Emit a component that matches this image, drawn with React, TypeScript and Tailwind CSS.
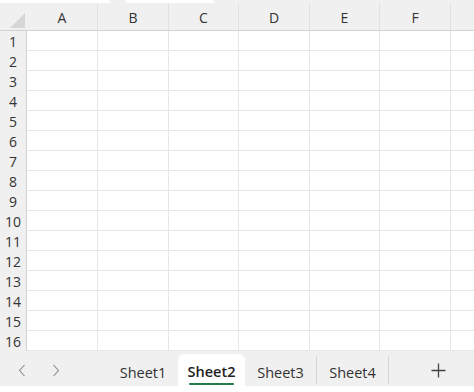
import React from 'react';

const COLS = [
  { label: 'A', w: 'w-[71px]' },
  { label: 'B', w: 'w-[71px]' },
  { label: 'C', w: 'w-[70px]' },
  { label: 'D', w: 'w-[71px]' },
  { label: 'E', w: 'w-[70px]' },
  { label: 'F', w: 'w-[71px]' },
];

const ROWS = Array.from({ length: 16 }, (_, i) => i + 1);

const TABS = [
  { label: 'Sheet1', w: 'w-[70px]' },
  { label: 'Sheet2', w: 'w-[67px]' },
  { label: 'Sheet3', w: 'w-[71px]' },
  { label: 'Sheet4', w: 'w-[71px]' },
];

const Chevron: React.FC<{ dir: 'left' | 'right' }> = ({ dir }) => (
  <svg width="8" height="13" viewBox="0 0 8 13">
    <path
      d={dir === 'left' ? 'M6.5 1L1.5 6.5L6.5 12' : 'M1.5 1L6.5 6.5L1.5 12'}
      fill="none"
      stroke="#8a8a8a"
      strokeWidth="1.1"
    />
  </svg>
);

const App: React.FC = () => {
  return (
    <div
      className="w-[474px] h-[392px] overflow-hidden bg-[#f0f0f0] flex flex-col text-[#333]"
      style={{ fontFamily: '"Open Sans", "Noto Sans", sans-serif' }}
    >
      {/* remnant of the bar above */}
      <div className="h-[3px] flex shrink-0">
        <div className="w-[110px] bg-white" />
        <div className="w-[16px]" />
        <div className="w-[88px] bg-white" />
      </div>

      {/* column headers */}
      <div className="h-[28px] flex shrink-0 border-b border-[#d2d2d2]">
        <div className="w-[27px] shrink-0 flex items-end justify-end pb-[2px] pr-[1px]">
          <svg width="16" height="15" viewBox="0 0 16 15">
            <polygon points="15,0 15,15 0,15" fill="#d6d6d6" />
          </svg>
        </div>
        {COLS.map((c) => (
          <div
            key={c.label}
            className={`${c.w} shrink-0 flex items-center justify-center text-[14px] pt-[2px] border-r border-[#e2e2e2]`}
          >
            {c.label}
          </div>
        ))}
        <div className="flex-1" />
      </div>

      {/* rows */}
      <div className="flex flex-col shrink-0">
        {ROWS.map((r) => (
          <div key={r} className="h-[20px] flex">
            <div className="w-[27px] shrink-0 flex items-center justify-center text-[14px] border-r border-[#d2d2d2]">
              {r}
            </div>
            <div className="flex-1 flex bg-white border-b border-[#e6e6e6]">
              {COLS.map((c) => (
                <div key={c.label} className={`${c.w} shrink-0 border-r border-[#e6e6e6]`} />
              ))}
            </div>
          </div>
        ))}
      </div>

      {/* sheet tabs */}
      <div className="flex-1 flex flex-col">
        <div className="h-[35px] flex items-stretch">
          <div className="w-[108px] flex items-center pt-[4px]">
            <span className="ml-[18px]"><Chevron dir="left" /></span>
            <span className="ml-[26px]"><Chevron dir="right" /></span>
          </div>
          {TABS.map((t, i) => {
            const active = t.label === 'Sheet2';
            return active ? (
              <div
                key={t.label}
                className={`${t.w} mt-[3px] -mb-[6px] bg-white rounded-t-[6px] flex flex-col items-center pt-[8px]`}
              >
                <span className="text-[14.5px] font-semibold text-[#222] leading-[20px]">{t.label}</span>
                <span className="mt-[1px] h-[2px] w-[45px] bg-[#237b4b] rounded" />
              </div>
            ) : (
              <div key={t.label} className="flex items-center">
                <div className={`${t.w} text-center text-[14.5px] text-[#333] pt-[8px]`}>{t.label}</div>
                {i >= 2 && <div className="w-px h-[28px] bg-[#d6d6d6] mt-[3px]" />}
              </div>
            );
          })}
          <div className="flex-1 flex items-center justify-center pt-[4px] pl-[14px]">
            <svg width="15" height="15" viewBox="0 0 15 15">
              <path d="M7.5 0.5v14M0.5 7.5h14" stroke="#444" strokeWidth="1.3" />
            </svg>
          </div>
        </div>
        <div className="flex-1 bg-white" />
      </div>
    </div>
  );
};

export default App;
